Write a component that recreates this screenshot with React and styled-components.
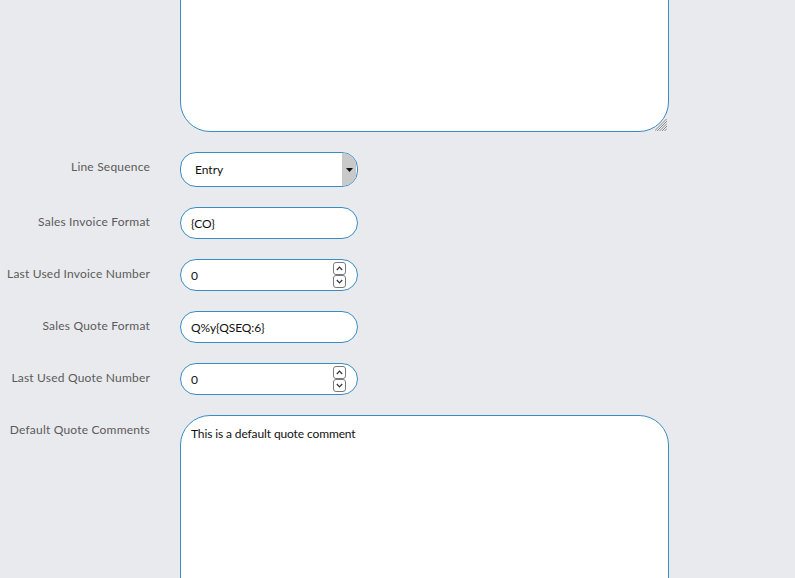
import React, { useState } from "react";
import styled, { createGlobalStyle } from "styled-components";

const Global = createGlobalStyle`
  html, body {
    margin: 0;
    padding: 0;
    background: #e9eaed;
    font-family: Lato, "Open Sans", sans-serif;
    overflow: hidden;
  }
`;

const accent = "#3b8cc3";

const Page = styled.div`
  margin-top: -80px;
  display: grid;
  grid-template-columns: 150px 489px;
  column-gap: 30px;
  row-gap: 20px;
  align-items: start;
`;

const Label = styled.label`
  padding-top: 7px;
  font-size: 12px;
  line-height: 16px;
  letter-spacing: 0.2px;
  color: #5b5b5b;
  text-align: right;
  white-space: nowrap;
`;

const Spacer = styled.div``;

const AreaWrap = styled.div`
  position: relative;
  width: 489px;
  height: ${(p) => p.$h}px;
`;

const Area = styled.textarea`
  box-sizing: border-box;
  display: block;
  width: 100%;
  height: 100%;
  border: 1px solid ${accent};
  border-radius: 30px;
  background: #fff;
  padding: 10px;
  font-family: Lato, "Open Sans", sans-serif;
  font-size: 12px;
  line-height: 16px;
  letter-spacing: -0.12px;
  color: #111;
  outline: none;
  resize: none;
`;

const Grip = styled.svg`
  position: absolute;
  right: 2px;
  bottom: 1px;
  pointer-events: none;
`;

const Field = styled.div`
  box-sizing: border-box;
  width: 178px;
  height: ${(p) => p.$h || 32}px;
  border: 1px solid ${accent};
  border-radius: 16px;
  background: #fff;
  display: flex;
  align-items: stretch;
  overflow: hidden;
  padding-right: ${(p) => p.$pr || 0}px;
`;

const Input = styled.input`
  flex: 1;
  min-width: 0;
  border: none;
  outline: none;
  background: transparent;
  padding: 0 0 0 10px;
  font-family: Lato, "Open Sans", sans-serif;
  font-size: 12px;
  letter-spacing: -0.12px;
  color: #111;
`;

const Select = styled.select`
  flex: 1;
  min-width: 0;
  appearance: none;
  border: none;
  outline: none;
  background: transparent;
  padding: 0 0 0 14px;
  font-family: Lato, "Open Sans", sans-serif;
  font-size: 12px;
  color: #111;
`;

const Arrow = styled.span`
  width: 14px;
  background: #c9c9c9;
  display: flex;
  align-items: center;
  justify-content: center;
`;

const Spin = styled.div`
  display: flex;
  flex-direction: column;
  justify-content: center;
  margin-right: 11px;
`;

const SpinBtn = styled.span`
  box-sizing: border-box;
  width: 13px;
  height: 13px;
  border: 1px solid #7a7a7a;
  border-radius: 3px;
  display: flex;
  align-items: center;
  justify-content: center;
  background: #fff;
`;

const Chevron = ({ up }) => (
  <svg width="7" height="5" viewBox="0 0 7 5">
    <path
      d={up ? "M0.8 4 L3.5 1.2 L6.2 4" : "M0.8 1 L3.5 3.8 L6.2 1"}
      fill="none"
      stroke="#333"
      strokeWidth="1.2"
    />
  </svg>
);

const NumberField = ({ value }) => (
  <Field>
    <Input defaultValue={value} />
    <Spin>
      <SpinBtn>
        <Chevron up />
      </SpinBtn>
      <SpinBtn>
        <Chevron />
      </SpinBtn>
    </Spin>
  </Field>
);

const TextBox = ({ h, value }) => (
  <AreaWrap $h={h}>
    <Area defaultValue={value} />
    <Grip width="12" height="12" viewBox="0 0 12 12">
      {[2.5, 5, 7.5, 10, 12.5].map((k) => (
        <line
          key={k}
          x1={12 - k}
          y1="12"
          x2="12"
          y2={12 - k}
          stroke="#8a8a8a"
          strokeWidth="1"
        />
      ))}
    </Grip>
  </AreaWrap>
);

export default function App() {
  const [seq, setSeq] = useState("Entry");
  return (
    <>
      <Global />
      <Page>
        <Spacer />
        <TextBox h={212} value="" />

        <Label>Line Sequence</Label>
        <Field $h={35} $pr={1}>
          <Select value={seq} onChange={(e) => setSeq(e.target.value)}>
            <option>Entry</option>
            <option>Item</option>
          </Select>
          <Arrow>
            <svg width="7" height="4" viewBox="0 0 7 4">
              <path d="M0 0 L7 0 L3.5 4 Z" fill="#111" />
            </svg>
          </Arrow>
        </Field>

        <Label>Sales Invoice Format</Label>
        <Field>
          <Input defaultValue="{CO}" />
        </Field>

        <Label>Last Used Invoice Number</Label>
        <NumberField value="0" />

        <Label>Sales Quote Format</Label>
        <Field>
          <Input defaultValue="Q%y{QSEQ:6}" />
        </Field>

        <Label>Last Used Quote Number</Label>
        <NumberField value="0" />

        <Label>Default Quote Comments</Label>
        <TextBox h={212} value="This is a default quote comment" />
      </Page>
    </>
  );
}
